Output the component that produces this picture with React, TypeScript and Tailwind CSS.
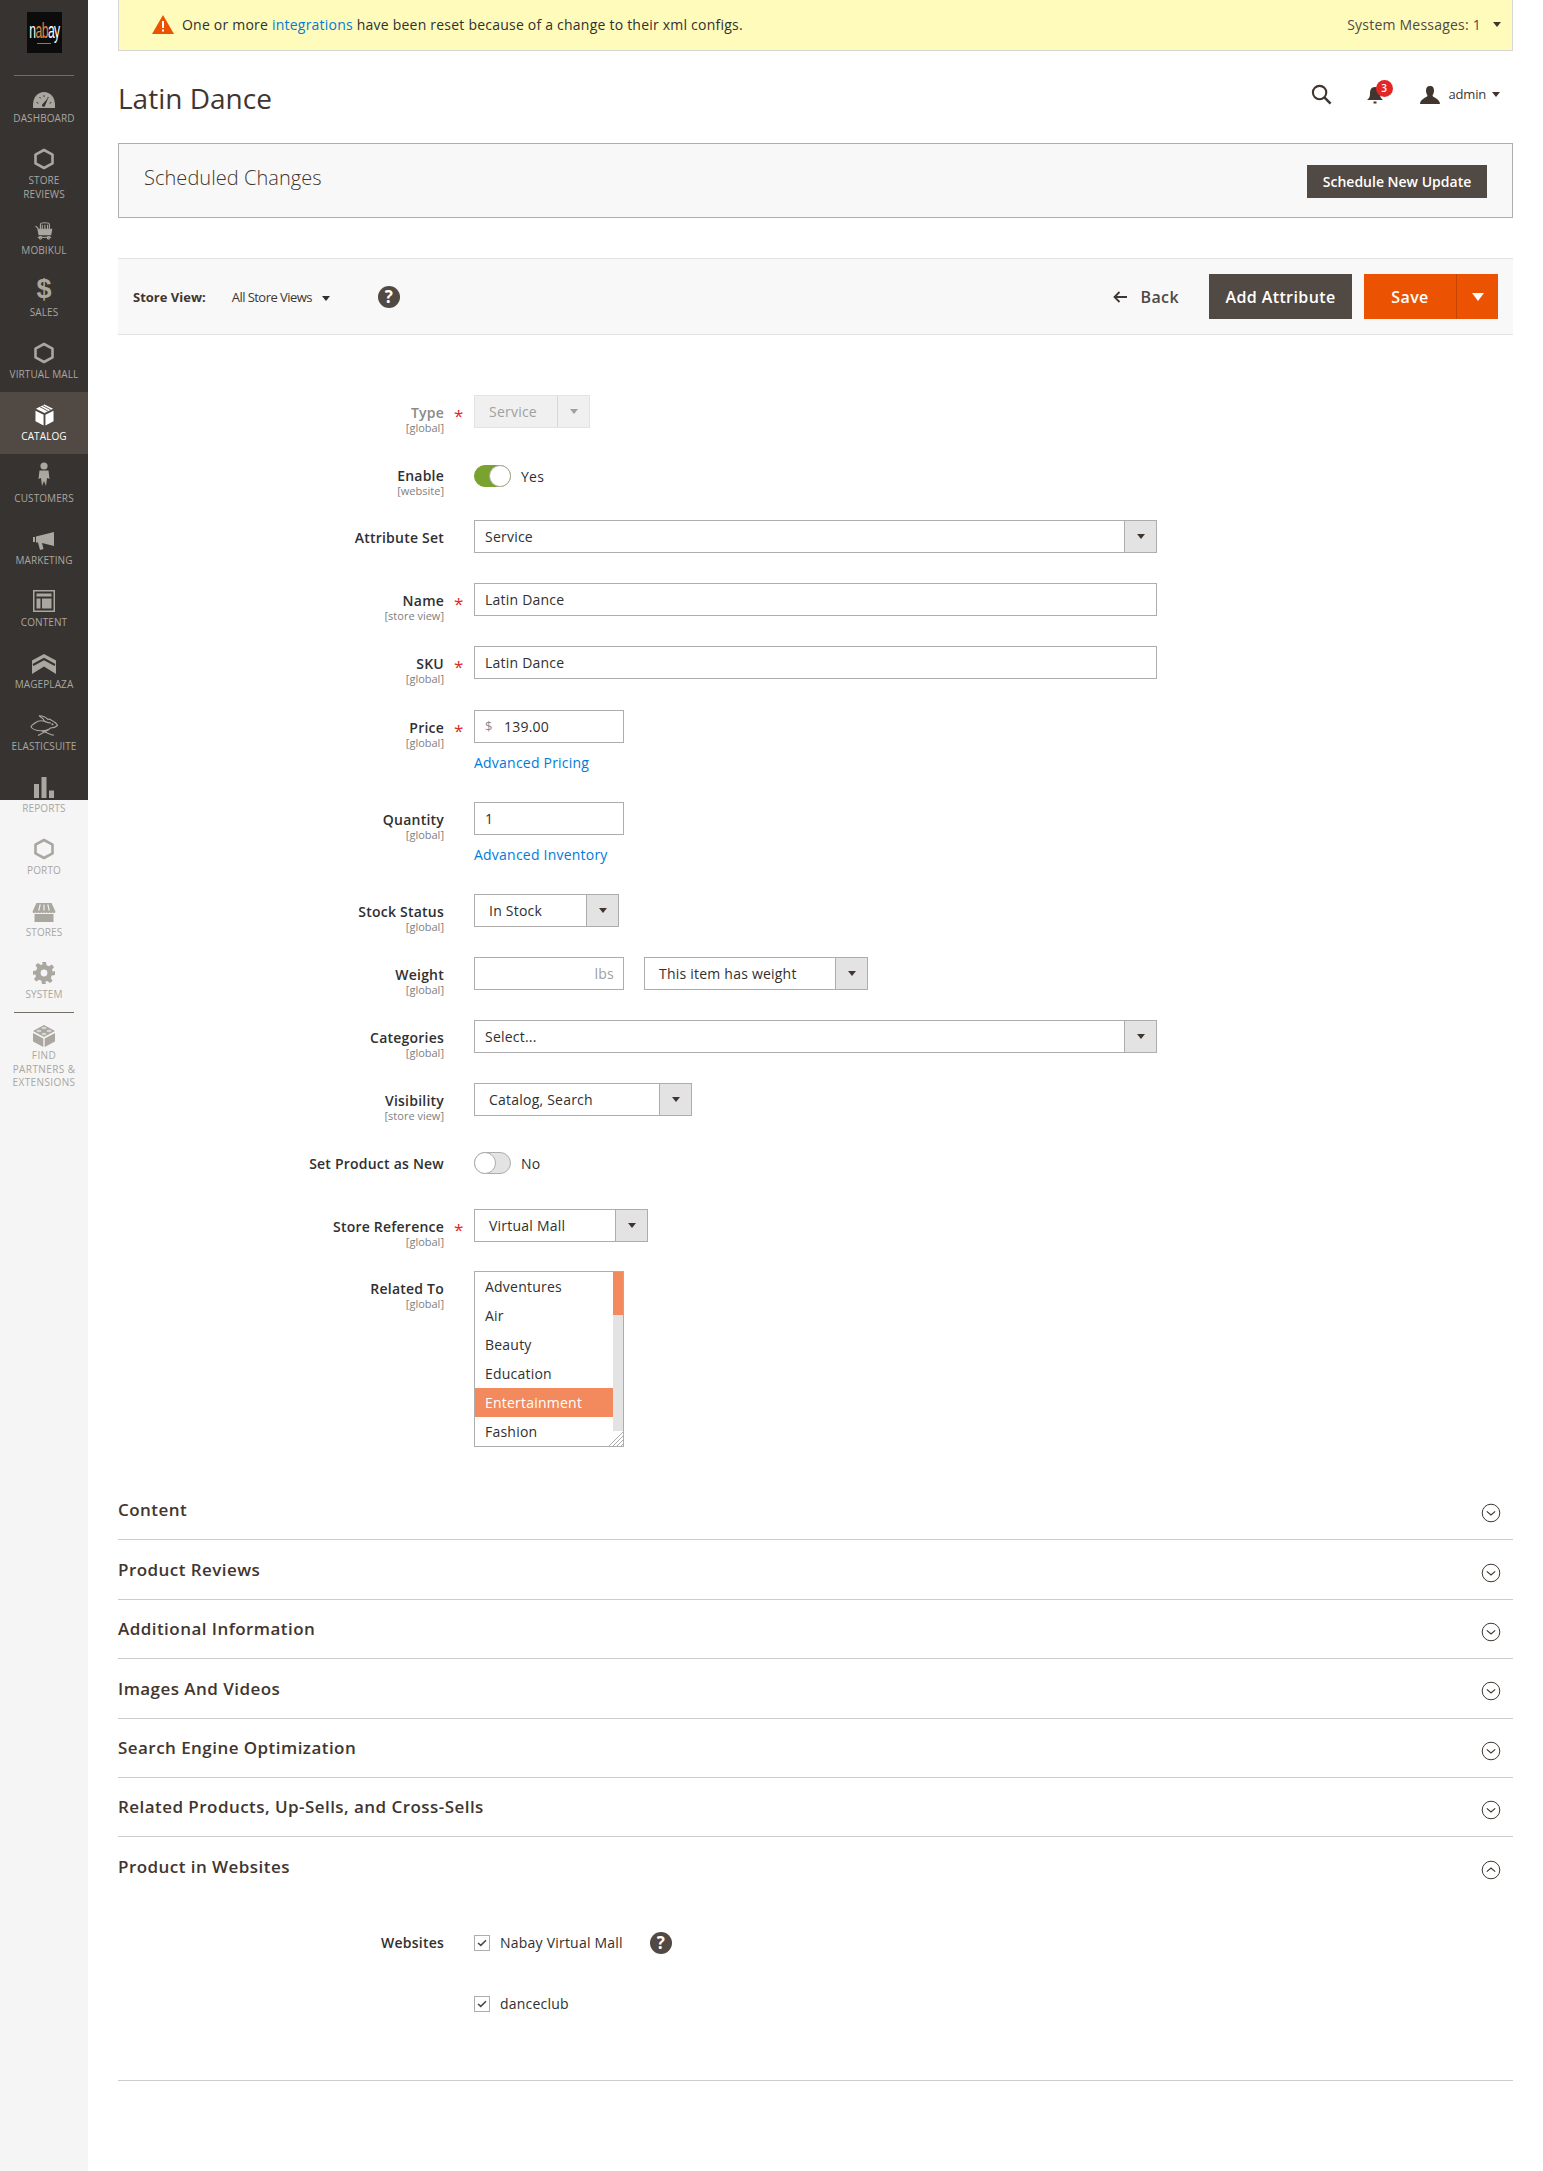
import React from 'react';

const stack = "font-['Open_Sans',_'Noto_Sans',sans-serif]";

const Hexagon = ({ className }: { className: string }) => (
  <svg viewBox="0 0 22 22" className={className} fill="none" stroke="currentColor" strokeWidth="2.6">
    <path d="M11 2 L19.5 6.6 V15.4 L11 20 L2.5 15.4 V6.6 Z" strokeLinejoin="round" />
  </svg>
);

const icons: Record<string, React.ReactNode> = {
  dashboard: (
    <svg viewBox="0 0 22 16" className="w-[22px] h-[16px]" fill="currentColor">
      <path d="M0 13 C0 5 5 0 11 0 C17 0 22 5 22 13 V16 H0 Z" />
      <path d="M3.6 10.5l1.8 .6M6.6 5l1 1.4M11 3.2v1.8M15.4 5l-1 1.4M18.4 10.5l-1.8 .6" stroke="#373330" strokeWidth="1" />
      <path d="M15.5 5.5 L12.2 13.2 A1.6 1.6 0 1 1 9.6 12 Z" fill="#373330" />
    </svg>
  ),
  hex: <Hexagon className="w-[22px] h-[22px]" />,
  mobikul: (
    <svg viewBox="0 0 20 20" className="w-[18px] h-[18px]" fill="none" stroke="currentColor" strokeWidth="1.2">
      <path d="M6 8V2.5C6 1.3 8 0.8 11 0.8s5 .5 5 1.7V8" />
      <path d="M8 3V8M11 3V8M14 3V8" />
      <path d="M0.5 4.5L3 6.5L4.5 14H17.5L18.5 8H4" fill="currentColor" />
      <path d="M3 17h15" />
      <circle cx="6" cy="17.6" r="1.4" />
      <circle cx="15" cy="17.6" r="1.4" />
    </svg>
  ),
  sales: <span className="text-[27px] leading-[27px] font-bold font-['Liberation_Sans',sans-serif] block -mb-[1px]">$</span>,
  catalog: (
    <svg viewBox="0 0 20 22" className="w-[19px] h-[22px]" fill="currentColor">
      <path d="M10 0 L19 4.4 L10 9 L1 4.4 Z" />
      <path d="M5 2.2 L13.5 6.8 M8 1 L16.5 5.6" stroke="#514943" strokeWidth="0.9" />
      <path d="M0.5 6.4 L9 10.8 V22 L0.5 17.6 Z" />
      <path d="M19.5 6.4 L11 10.8 V22 L19.5 17.6 Z" />
    </svg>
  ),
  customers: (
    <svg viewBox="0 0 12 24" className="w-[12px] h-[24px] mb-[2px]" fill="currentColor">
      <circle cx="6" cy="4" r="3.6" />
      <path d="M1.5 8.5 H10.5 L11.5 17 L9 16 L8 24 L6 19 L4 24 L3 16 L0.5 17 Z" />
    </svg>
  ),
  marketing: (
    <svg viewBox="0 0 22 18" className="w-[22px] h-[18px]" fill="currentColor">
      <path d="M0 5 H2 V10 H0 Z" />
      <path d="M3 4.5 L21 0 V14 L9 11 L10.5 17 L7 18 L5 10.5 H3 Z" />
    </svg>
  ),
  content: (
    <svg viewBox="0 0 22 22" className="w-[22px] h-[22px]" fill="currentColor">
      <path fillRule="evenodd" d="M0 0H22V22H0Z M1.5 1.5V20.5H20.5V1.5Z" />
      <path d="M3.5 3.5H18.5V6.5H3.5Z M3.5 8.5H7.5V18.5H3.5Z M9 8.5H18.5V18.5H9Z" />
    </svg>
  ),
  mageplaza: (
    <svg viewBox="0 0 24 20" className="w-[24px] h-[20px]" fill="currentColor">
      <path d="M12 0 L24 6.5 V20 L12 12.5 L0 20 V6.5 Z" />
      <path d="M1 11 L12 5 L23 11" fill="none" stroke="#373330" strokeWidth="2" />
    </svg>
  ),
  elastic: (
    <svg viewBox="0 0 28 21" className="w-[28px] h-[21px]" fill="none" stroke="currentColor" strokeWidth="1.1">
      <path d="M1 12 C2 9 4 9 5 8 C8 5.5 12 5.5 15 6.5 C13.5 4 11 2 9 0.8 C13 1 16 2.5 18 4.5 C19 4 20 4 21 5 C24 6.5 27 9 27.5 10.5 C26 12 23 13 20.5 13 C18.5 15 15 16 11 15.8 C7 15.6 3 15 1 12 Z" />
      <path d="M8 20.5 L19 14.5 M12 15.8 L22 20 L24 20" />
      <path d="M15 6.5 C17 7.5 19 8 21 8" />
      <circle cx="22.5" cy="9.3" r="0.5" fill="currentColor" />
    </svg>
  ),
  reports: (
    <svg viewBox="0 0 20 21" className="w-[20px] h-[21px]" fill="currentColor">
      <path d="M0 7H5V21H0Z M7.5 0H12.5V21H7.5Z M15 13.5H20V21H15Z" />
    </svg>
  ),
  stores: (
    <svg viewBox="0 0 24 20" className="w-[24px] h-[19px]" fill="currentColor">
      <path d="M4 0 H20 L24 9 C24 11 21 11 21 9.5 C21 11 18 11 18 9.5 C18 11 15 11 15 9.5 C15 11 12 11 12 9.5 C12 11 9 11 9 9.5 C9 11 6 11 6 9.5 C6 11 3 11 3 9.5 C3 11 0 11 0 9 Z" />
      <path d="M8 1.5 L6.5 8 M12 1.5 V8 M16 1.5 L17.5 8" stroke="#f5f5f5" strokeWidth="1.2" />
      <path d="M2 11.5 H22 V20 H2 Z" />
    </svg>
  ),
  system: (
    <svg viewBox="0 0 22 22" className="w-[22px] h-[22px]" fill="currentColor">
      <path fillRule="evenodd" d="M9 0H13L13.6 3.2L16 4.2L18.8 2.4L21 5L19 7.8L19.8 9.8L22 9V13L18.8 13.6L17.8 16L19.6 18.8L17 21L14.2 19L12.2 19.8L13 22H9L8.4 18.8L6 17.8L3.2 19.6L1 17L3 14.2L2.2 12.2L0 13V9L3.2 8.4L4.2 6L2.4 3.2L5 1L7.8 3L9.8 2.2Z M11 7.6A3.4 3.4 0 1 0 11 14.4A3.4 3.4 0 1 0 11 7.6Z" />
    </svg>
  ),
  partners: (
    <svg viewBox="0 0 22 22" className="w-[22px] h-[22px]" fill="currentColor">
      <path d="M11 0 L22 6 L11 12 L0 6 Z" />
      <path d="M0 8 L10.3 13.6 V22 L0 16.6 Z M22 8 L11.7 13.6 V22 L22 16.6 Z" />
      <ellipse cx="11" cy="3" rx="2.5" ry="1.2" fill="#f5f5f5" fillOpacity="0.6" />
      <ellipse cx="6" cy="6" rx="2.5" ry="1.2" fill="#f5f5f5" fillOpacity="0.6" />
      <ellipse cx="16" cy="6" rx="2.5" ry="1.2" fill="#f5f5f5" fillOpacity="0.6" />
      <ellipse cx="11" cy="9" rx="2.5" ry="1.2" fill="#f5f5f5" fillOpacity="0.6" />
    </svg>
  ),
};

const menu: { icon: string; label: string[]; active?: boolean }[] = [
  { icon: 'dashboard', label: ['DASHBOARD'] },
  { icon: 'hex', label: ['STORE', 'REVIEWS'] },
  { icon: 'mobikul', label: ['MOBIKUL'] },
  { icon: 'sales', label: ['SALES'] },
  { icon: 'hex', label: ['VIRTUAL MALL'] },
  { icon: 'catalog', label: ['CATALOG'], active: true },
  { icon: 'customers', label: ['CUSTOMERS'] },
  { icon: 'marketing', label: ['MARKETING'] },
  { icon: 'content', label: ['CONTENT'] },
  { icon: 'mageplaza', label: ['MAGEPLAZA'] },
  { icon: 'elastic', label: ['ELASTICSUITE'] },
  { icon: 'reports', label: ['REPORTS'] },
  { icon: 'hex', label: ['PORTO'] },
  { icon: 'stores', label: ['STORES'] },
  { icon: 'system', label: ['SYSTEM'] },
];

const Caret = ({ className = 'border-t-[#41362f]' }: { className?: string }) => (
  <span className={`inline-block w-0 h-0 border-x-[4px] border-x-transparent border-t-[5px] ${className}`} />
);

const Help = () => (
  <span className="w-[22px] h-[22px] rounded-full bg-[#514943] text-white flex items-center justify-center text-[17px] font-bold leading-none tracking-normal">?</span>
);

const Select = ({ value, width, disabled, pad = 'pl-[14px]' }: { value: string; width: string; disabled?: boolean; pad?: string }) => (
  <div className={`${width} h-[33px] flex border text-[14px] ${disabled ? 'border-[#e3e3e3] bg-[#f0f0f0] text-[#a0a0a0]' : 'border-[#adadad] bg-white text-[#303030]'}`}>
    <span className={`flex-1 flex items-center ${pad} whitespace-nowrap`}>{value}</span>
    <span className={`w-[32px] flex items-center justify-center border-l ${disabled ? 'border-[#d8d8d8]' : 'border-[#adadad] bg-[#e3e3e3]'}`}>
      <Caret className={disabled ? 'border-t-[#a0a0a0]' : 'border-t-[#41362f]'} />
    </span>
  </div>
);

const Text = ({ value, width }: { value: string; width: string }) => (
  <div className={`${width} h-[33px] border border-[#adadad] bg-white flex items-center pl-[10px] text-[14px] text-[#303030]`}>{value}</div>
);

const Toggle = ({ on, label }: { on?: boolean; label: string }) => (
  <div className="flex items-center gap-[10px] h-[22px]">
    <span className={`w-[37px] h-[22px] rounded-full flex border ${on ? 'bg-[#79a22e] border-[#79a22e] justify-end' : 'bg-[#e3e3e3] border-[#adadad] justify-start'}`}>
      <span className="w-[22px] h-[22px] -my-px -mx-px rounded-full bg-white border border-[#adadad]" />
    </span>
    <span className="text-[14px] text-[#303030]">{label}</span>
  </div>
);

const Row = ({ label, scope, required, muted, mb = 'mb-[30px]', children }: { label: string; scope?: string; required?: boolean; muted?: boolean; mb?: string; children: React.ReactNode }) => (
  <div className={`flex items-start ${mb}`}>
    <div className="w-[326px] h-[33px] text-right pt-[8px]">
      <div className={`text-[14px] leading-[19px] font-semibold ${muted ? 'text-[#8a8a8a]' : 'text-[#303030]'}`}>{label}</div>
      {scope && <div className="text-[11px] leading-[12px] text-[#808080] tracking-normal">{scope}</div>}
    </div>
    <div className="w-[30px] h-[33px] pt-[11px] pl-[10px] text-[#e22626] text-[17px] leading-[19px]">{required ? '*' : ''}</div>
    <div>{children}</div>
  </div>
);

const sections = ['Content', 'Product Reviews', 'Additional Information', 'Images And Videos', 'Search Engine Optimization', 'Related Products, Up-Sells, and Cross-Sells'];

const Chevron = ({ up }: { up?: boolean }) => (
  <svg viewBox="0 0 20 20" className="w-[20px] h-[20px] mt-[6px] text-[#41362f]" fill="none" stroke="currentColor">
    <circle cx="10" cy="10" r="8.8" />
    <path d={up ? 'M5.8 11.6 L10 8 L14.2 11.6' : 'M5.8 8.4 L10 12 L14.2 8.4'} strokeWidth="1.2" />
  </svg>
);

const Check = () => (
  <span className="w-[16px] h-[16px] border border-[#adadad] flex items-center justify-center">
    <svg viewBox="0 0 12 10" className="w-[10px] h-[8px]" fill="none" stroke="#514943" strokeWidth="2">
      <path d="M1 5 L4.5 8 L11 1.5" />
    </svg>
  </span>
);

export default function App() {
  return (
    <div className={`flex w-[1543px] min-h-[2171px] bg-white ${stack}`}>
      <aside className="w-[88px] shrink-0 bg-[linear-gradient(#373330_800px,#f5f5f5_800px)] text-[#aaa6a0]">
        <div className="h-[75px] pt-[12px] flex justify-center">
          <div className="w-[35px] h-[41px] bg-[#0c0c0c] flex flex-col items-center pt-[9px] overflow-hidden text-white font-['Liberation_Sans',sans-serif]">
            <span className="text-[22px] leading-[20px] scale-x-[0.55] whitespace-nowrap tracking-[-1px]">
              n<span className="text-[#e9823f]">ab</span>ay
            </span>
            <span className="mt-[2px] w-[14px] h-[1px] bg-[#c9682a]" />
          </div>
        </div>
        <div className="mx-[14px] h-px bg-[#736d66]" />
        <nav className="-mt-[2px]">
          {menu.map((m) => (
            <div key={m.label[0]} className={`flex flex-col items-center pt-[8px] ${m.label.length > 1 ? 'h-[70px]' : 'h-[62px]'} ${m.active ? 'bg-[#514943] text-white' : ''}`}>
              <span className="h-[26px] flex items-end justify-center">{icons[m.icon]}</span>
              <span className="h-[3px]" />
              {m.label.map((l) => (
                <span key={l} className="text-[10px] leading-[14px] whitespace-nowrap tracking-[0.1px]">{l}</span>
              ))}
            </div>
          ))}
        </nav>
        <div className="mx-[14px] h-px bg-[#736d66]" />
        <div className="flex flex-col items-center pt-[12px]">
          {icons.partners}
          <span className="text-[10px] leading-[13.5px] mt-[2px] text-center tracking-[0.4px]">FIND<br />PARTNERS &amp;<br />EXTENSIONS</span>
        </div>
      </aside>

      <main className="w-[1395px] ml-[30px] text-[#41362f] tracking-[0.22px]">
        <div className="h-[51px] bg-[#fffbbb] border border-t-0 border-[#d6d6d6] flex items-center pl-[33px] pr-[11px] pb-[1px] text-[14px] text-[#303030]">
          <svg viewBox="0 0 22 19" className="w-[22px] h-[19px] mr-[8px]" fill="#eb5202">
            <path d="M11 0 L22 19 H0 Z" />
            <path d="M10 6 H12 V13 H10 Z M10 14.5 H12 V16.5 H10 Z" fill="#fff" />
          </svg>
          <span>One or more <span className="text-[#007bdb]">integrations</span> have been reset because of a change to their xml configs.</span>
          <span className="ml-auto text-[#514943] flex items-center gap-[12px]">System Messages: 1 <Caret /></span>
        </div>

        <div className="h-[92px] flex items-center tracking-normal">
          <h1 className="text-[28px] font-normal text-[#41362f] mt-[1px]">Latin Dance</h1>
          <div className="ml-auto flex items-center pr-[13px] pb-[5px]">
            <svg viewBox="0 0 22 22" className="w-[21px] h-[21px] mr-[35px]" fill="none" stroke="#41362f" strokeWidth="2.2">
              <circle cx="9" cy="9" r="7" />
              <path d="M14 14 L20.5 20.5" strokeWidth="2.6" />
            </svg>
            <span className="relative w-[16px] h-[18px] mr-[37px]">
              <svg viewBox="0 0 16 18" className="w-[16px] h-[18px]" fill="#41362f">
                <path d="M8 1 C12 1 13 4 13 8 C13 11 14 12 16 14 H0 C2 12 3 11 3 8 C3 4 4 1 8 1 Z M6.5 15.5 H9.5 V17.5 H6.5 Z" />
              </svg>
              <span className="absolute -top-[6px] left-[9px] w-[17px] h-[17px] rounded-full bg-[#e22626] text-white text-[10px] font-semibold flex items-center justify-center">3</span>
            </span>
            <svg viewBox="0 0 20 18" className="w-[20px] h-[18px] mr-[9px]" fill="#41362f">
              <path d="M10 0 C13 0 14 2 14 4.5 C14 7 13 8.5 12.5 9.5 C12.5 11.5 20 12.5 20 18 H0 C0 12.5 7.5 11.5 7.5 9.5 C7 8.5 6 7 6 4.5 C6 2 7 0 10 0 Z" />
            </svg>
            <span className="text-[13px] tracking-[-0.2px] mr-[6px]">admin</span>
            <Caret />
          </div>
        </div>

        <div className="h-[75px] border border-[#adadad] bg-[#f8f8f8] flex items-center pl-[25px] pr-[25px] tracking-normal">
          <span className="text-[20px] font-light text-[#41362f] -mt-[5px] tracking-[0.05px]">Scheduled Changes</span>
          <span className="ml-auto h-[33px] w-[180px] bg-[#514943] text-white text-[14px] font-semibold flex items-center justify-center mt-[1px]">Schedule New Update</span>
        </div>

        <div className="h-[77px] mt-[40px] border-y border-[#e3e3e3] bg-[#f8f8f8] flex items-center pl-[15px] pr-[15px] tracking-normal">
          <span className="text-[13px] font-bold text-[#41362f] mt-[3px]">Store View:</span>
          <span className="ml-[26px] text-[13px] tracking-[-0.55px] text-[#41362f] mt-[3px]">All Store Views</span>
          <span className="ml-[10px] flex mt-[3px]"><Caret className="border-t-[#303030]" /></span>
          <span className="ml-[48px]"><Help /></span>
          <span className="ml-auto flex items-center gap-[13px] text-[16px] font-semibold text-[#514943] tracking-[0.4px]">
            <svg viewBox="0 0 14 12" className="w-[14px] h-[12px]" fill="none" stroke="#41362f" strokeWidth="1.8">
              <path d="M14 6 H2 M6.5 1 L1.5 6 L6.5 11" />
            </svg>
            Back
          </span>
          <span className="ml-[30px] h-[45px] w-[143px] bg-[#514943] text-white text-[16px] font-semibold tracking-[0.4px] flex items-center justify-center">Add Attribute</span>
          <span className="ml-[12px] h-[45px] w-[134px] bg-[#eb5202] text-white text-[16px] font-semibold tracking-[0.4px] flex">
            <span className="flex-1 flex items-center justify-center">Save</span>
            <span className="w-[42px] flex items-center justify-center border-l border-[#c54400]">
              <span className="w-0 h-0 border-x-[6px] border-x-transparent border-t-[8px] border-t-white" />
            </span>
          </span>
        </div>

        <form className="pt-[60px]">
          <Row label="Type" scope="[global]" required muted>
            <Select value="Service" width="w-[116px]" disabled />
          </Row>
          <Row label="Enable" scope="[website]" mb="mb-[29px]">
            <div className="pt-[7px] pb-[4px]"><Toggle on label="Yes" /></div>
          </Row>
          <Row label="Attribute Set">
            <Select value="Service" width="w-[683px]" pad="pl-[10px]" />
          </Row>
          <Row label="Name" scope="[store view]" required>
            <Text value="Latin Dance" width="w-[683px]" />
          </Row>
          <Row label="SKU" scope="[global]" required mb="mb-[31px]">
            <Text value="Latin Dance" width="w-[683px]" />
          </Row>
          <Row label="Price" scope="[global]" required>
            <div className="w-[150px] h-[33px] border border-[#adadad] flex items-center pl-[10px] text-[14px] text-[#303030]">
              <span className="text-[#8a8a8a] w-[19px] text-[13px]">$</span>139.00
            </div>
            <div className="mt-[10px] text-[14px] leading-[19px] text-[#007bdb]">Advanced Pricing</div>
          </Row>
          <Row label="Quantity" scope="[global]">
            <Text value="1" width="w-[150px]" />
            <div className="mt-[10px] text-[14px] leading-[19px] text-[#007bdb]">Advanced Inventory</div>
          </Row>
          <Row label="Stock Status" scope="[global]">
            <Select value="In Stock" width="w-[145px]" />
          </Row>
          <Row label="Weight" scope="[global]">
            <div className="flex gap-[20px]">
              <div className="w-[150px] h-[33px] border border-[#adadad] flex items-center justify-end pr-[9px] text-[14px] text-[#a0a0a0]">lbs</div>
              <Select value="This item has weight" width="w-[224px]" />
            </div>
          </Row>
          <Row label="Categories" scope="[global]">
            <Select value="Select..." width="w-[683px]" pad="pl-[10px]" />
          </Row>
          <Row label="Visibility" scope="[store view]">
            <Select value="Catalog, Search" width="w-[218px]" />
          </Row>
          <Row label="Set Product as New">
            <div className="pt-[6px] pb-[5px]"><Toggle label="No" /></div>
          </Row>
          <Row label="Store Reference" scope="[global]" required mb="mb-[29px]">
            <Select value="Virtual Mall" width="w-[174px]" />
          </Row>
          <Row label="Related To" scope="[global]" mb="mb-[0px]">
            <div className="relative w-[150px] h-[176px] border border-[#adadad] flex overflow-hidden text-[14px] text-[#303030]">
              <div className="flex-1">
                {['Adventures', 'Air', 'Beauty', 'Education', 'Entertainment', 'Fashion'].map((o) => (
                  <div key={o} className={`h-[29px] pl-[10px] flex items-center ${o === 'Entertainment' ? 'bg-[#f38a5e] text-white' : ''}`}>{o}</div>
                ))}
              </div>
              <div className="w-[10px] h-[159px] bg-[#e3e3e3]">
                <div className="h-[43px] bg-[#f38a5e]" />
              </div>
              <svg viewBox="0 0 15 15" className="absolute right-0 bottom-0 w-[15px] h-[15px]" stroke="#adadad" strokeWidth="1">
                <path d="M15 1 L1 15 M15 5 L5 15 M15 9 L9 15 M15 13 L13 15" />
              </svg>
            </div>
          </Row>
        </form>

        <div className="mt-[34px]">
          {sections.map((s) => (
            <div key={s} className="h-[59.4px] border-b border-[#cccccc] flex items-center justify-between pr-[12px]">
              <span className="text-[17px] font-semibold text-[#41362f] tracking-[0.45px]">{s}</span>
              <Chevron />
            </div>
          ))}
          <div className="h-[59.4px] flex items-center justify-between pr-[12px]">
            <span className="text-[17px] font-semibold text-[#41362f] tracking-[0.45px]">Product in Websites</span>
            <Chevron up />
          </div>
        </div>

        <div className="pt-[36px] h-[184px] border-b border-[#cccccc]">
          <div className="flex items-center h-[20px] mb-[41px]">
            <span className="w-[326px] text-right text-[14px] font-semibold text-[#303030]">Websites</span>
            <span className="ml-[30px] mr-[10px]"><Check /></span>
            <span className="text-[14px] text-[#303030]">Nabay Virtual Mall</span>
            <span className="ml-[27px]"><Help /></span>
          </div>
          <div className="flex items-center h-[20px]">
            <span className="w-[326px]" />
            <span className="ml-[30px] mr-[10px]"><Check /></span>
            <span className="text-[14px] text-[#303030]">danceclub</span>
          </div>
        </div>
      </main>
    </div>
  );
}
